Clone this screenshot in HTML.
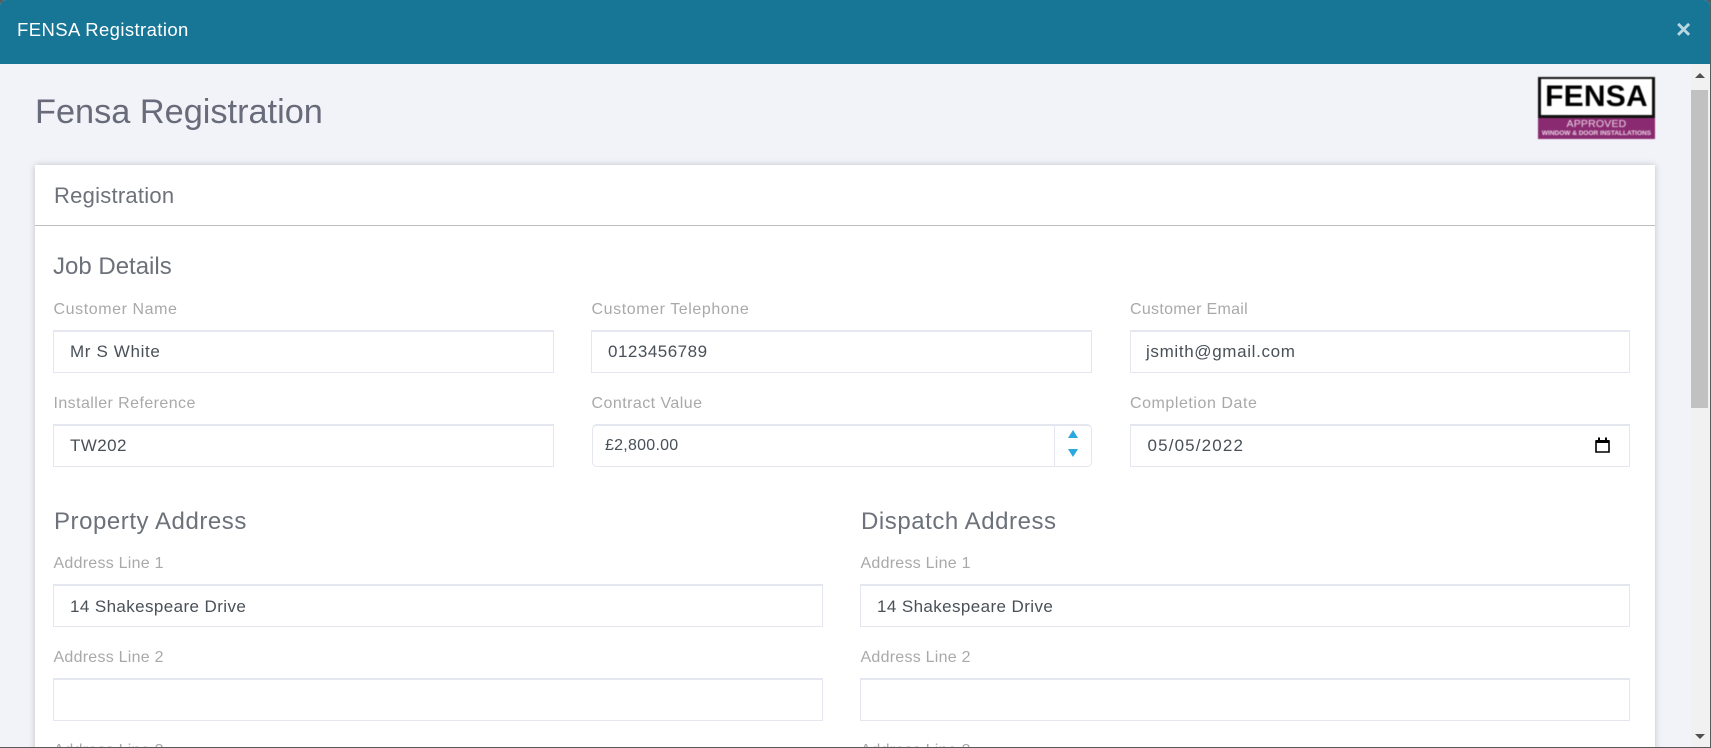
<!DOCTYPE html>
<html><head><meta charset="utf-8"><style>
html,body{margin:0;padding:0;width:1711px;height:748px;overflow:hidden;background:#5a5a5a;font-family:"Liberation Sans",sans-serif}
.m{position:absolute;left:0;top:0;width:1710px;height:747px;background:#f2f3f8;border-radius:6px 6px 0 0;overflow:hidden}
.a{position:absolute;white-space:nowrap;line-height:24px;height:24px}
.h{position:absolute;left:-1px;top:-1px;width:1711px;height:65px;background:#177596}
.l{color:#aaa9a9;font-size:16px;letter-spacing:.25px}
.i{position:absolute;box-sizing:border-box;height:43px;background:#fff;border:1px solid #e5e7f0;border-top:2px solid #e5e7f0}
.v{color:#495057;font-size:17px;letter-spacing:.4px}
.s{color:#6c717a;font-size:24px;letter-spacing:.55px}
</style></head><body>
<div class="m">
<div class="h"></div>
<div class="a" style="left:17px;top:18px;color:#fff;font-size:18.5px;letter-spacing:.4px">FENSA Registration</div>
<div class="a" style="left:1676px;top:17px;color:#b9d7e2;font-size:26px;font-weight:bold">×</div>
<div class="a" style="left:35px;top:92px;height:40px;line-height:40px;color:#676b7a;font-size:34.3px">Fensa Registration</div>
<div style="position:absolute;left:1538px;top:77px;width:117px;height:62px;background:#8a2a70;overflow:hidden;filter:blur(.4px)">
<div style="box-sizing:border-box;width:117px;height:41px;background:#fff;border:3px solid #111;border-top-width:2px;color:#000;font-weight:bold;font-size:30px;line-height:35px;text-align:center;letter-spacing:.2px">FENSA</div>
<div style="color:#ecd6e7;font-size:10.5px;line-height:11px;text-align:center;height:11px;margin-top:1px;letter-spacing:.2px">APPROVED</div>
<div style="color:#ecd6e7;font-size:6.5px;line-height:8px;text-align:center;font-weight:bold;margin-top:0">WINDOW &amp; DOOR INSTALLATIONS</div>
</div>
<div style="position:absolute;left:1691px;top:64px;width:18px;height:683px;background:#f1f1f1"></div>
<div style="position:absolute;left:1691px;top:90px;width:17px;height:318px;background:#c1c1c1"></div>
<div style="position:absolute;left:1695px;top:73px;border:5px solid transparent;border-top:0;border-bottom:5px solid #505050"></div>
<div style="position:absolute;left:1695px;top:734px;border:5px solid transparent;border-bottom:0;border-top:5px solid #505050"></div>
<div style="position:absolute;left:35px;top:165px;width:1620px;height:600px;background:#fff;box-shadow:0 0 6px rgba(80,80,90,.3)"></div>
<div style="position:absolute;left:35px;top:225px;width:1620px;height:1px;background:#bdbdbd"></div>
<div class="a" style="left:54px;top:184px;color:#6c717a;font-size:22px;letter-spacing:.25px">Registration</div>
<div class="a s" style="left:53px;top:255px;letter-spacing:0">Job Details</div>
<div class="a l" style="left:53.5px;top:298px;letter-spacing:.58px">Customer Name</div>
<div class="a l" style="left:591.5px;top:298px;letter-spacing:.58px">Customer Telephone</div>
<div class="a l" style="left:1130px;top:298px;letter-spacing:.3px">Customer Email</div>
<div class="i" style="left:53px;top:330px;width:501px"></div>
<div class="i" style="left:591px;top:330px;width:501px"></div>
<div class="i" style="left:1130px;top:330px;width:500px"></div>
<div class="a v" style="left:70px;top:340px;letter-spacing:.64px">Mr S White</div>
<div class="a v" style="left:608px;top:340px;letter-spacing:.5px">0123456789</div>
<div class="a v" style="left:1146px;top:340px;letter-spacing:.65px">jsmith@gmail.com</div>
<div class="a l" style="left:53.5px;top:392px;letter-spacing:.42px">Installer Reference</div>
<div class="a l" style="left:591.5px;top:392px;letter-spacing:.45px">Contract Value</div>
<div class="a l" style="left:1130px;top:392px;letter-spacing:.55px">Completion Date</div>
<div class="i" style="left:53px;top:424px;width:501px"></div>
<div class="i" style="left:592px;top:424px;width:500px;border-radius:5px"></div>
<div style="position:absolute;left:1054px;top:425px;width:1px;height:41px;background:#e5e7f0"></div>
<div style="position:absolute;left:1068px;top:430px;border:5.5px solid transparent;border-top:0;border-bottom:8px solid #29a9de"></div>
<div style="position:absolute;left:1068px;top:449px;border:5.5px solid transparent;border-bottom:0;border-top:8px solid #29a9de"></div>
<div class="i" style="left:1130px;top:424px;width:500px"></div>
<div class="a v" style="left:70px;top:434px">TW202</div>
<div class="a" style="left:605px;top:434px;color:#495057;font-size:16px;letter-spacing:.25px">£2,800.00</div>
<div class="a v" style="left:1147.5px;top:434px;letter-spacing:1.15px">05/05/2022</div>
<svg style="position:absolute;left:1595px;top:437px" width="15" height="16" viewBox="0 0 15 16"><path d="M1 4h13v11H1z" fill="none" stroke="#000" stroke-width="1.6"/><path d="M1 3h13v3H1z M3 0.5h2v3H3z M10 0.5h2v3h-2z" fill="#000"/></svg>
<div class="a s" style="left:54px;top:510px">Property Address</div>
<div class="a s" style="left:861px;top:510px">Dispatch Address</div>
<div class="a l" style="left:53.5px;top:552px">Address Line 1</div>
<div class="a l" style="left:860.5px;top:552px">Address Line 1</div>
<div class="i" style="left:53px;top:584px;width:770px"></div>
<div class="i" style="left:860px;top:584px;width:770px"></div>
<div class="a v" style="left:70px;top:594.5px">14 Shakespeare Drive</div>
<div class="a v" style="left:877px;top:594.5px">14 Shakespeare Drive</div>
<div class="a l" style="left:53.5px;top:646px">Address Line 2</div>
<div class="a l" style="left:860.5px;top:646px">Address Line 2</div>
<div class="i" style="left:53px;top:678px;width:770px"></div>
<div class="i" style="left:860px;top:678px;width:770px"></div>
<div class="a l" style="left:53.5px;top:739px">Address Line 3</div>
<div class="a l" style="left:860.5px;top:739px">Address Line 3</div>
</div>
</body></html>
